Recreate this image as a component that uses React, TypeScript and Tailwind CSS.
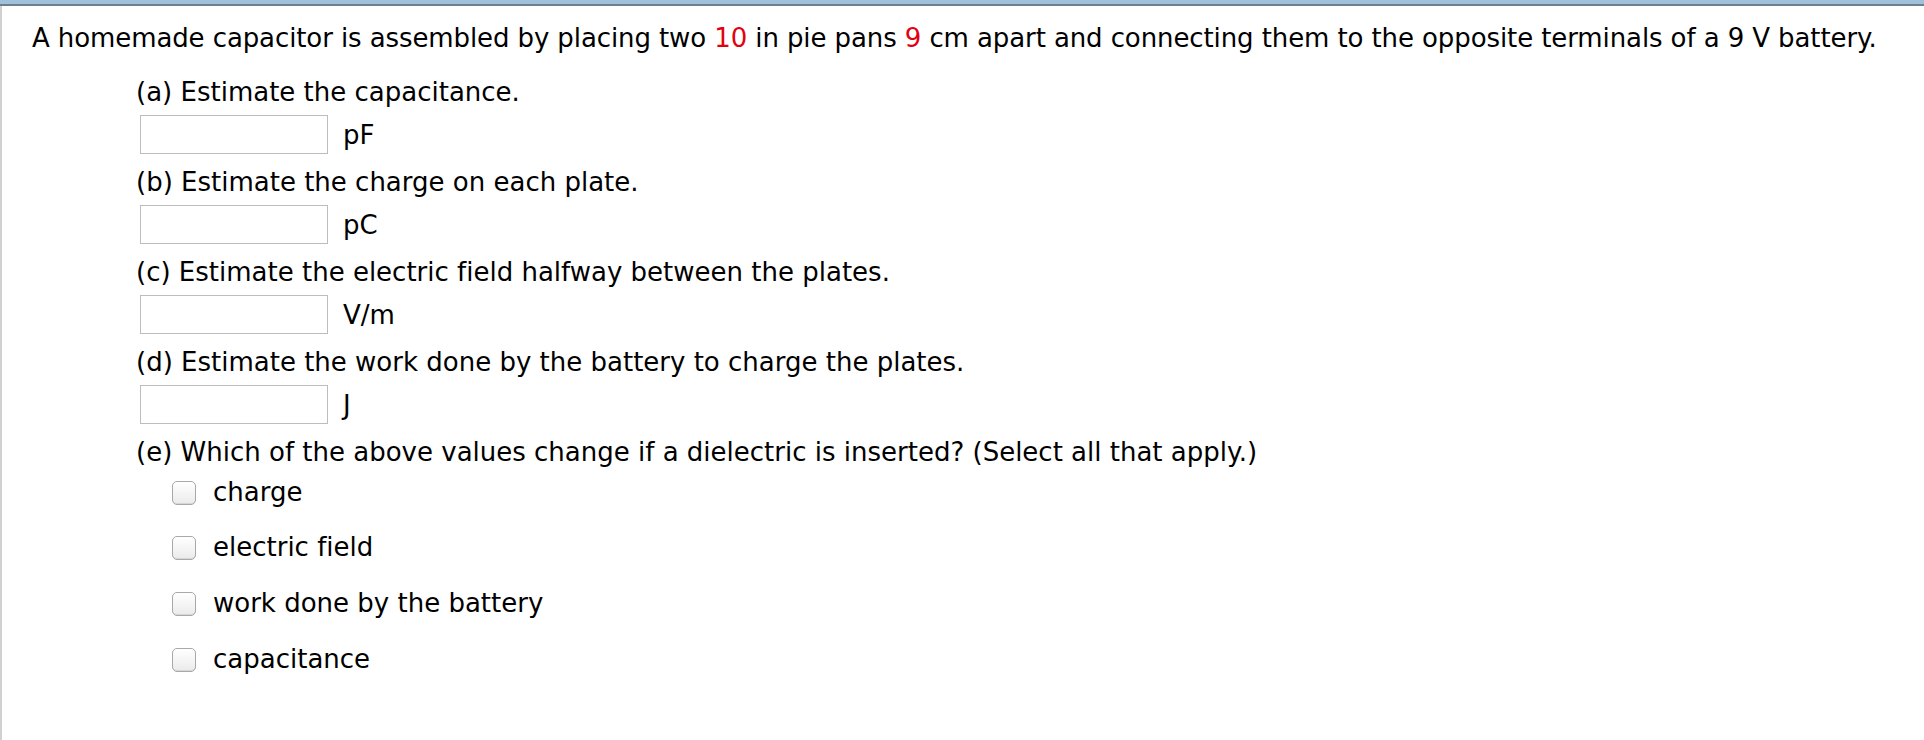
import React from 'react';

const questions = [
  { label: '(a) Estimate the capacitance.', unit: 'pF' },
  { label: '(b) Estimate the charge on each plate.', unit: 'pC' },
  { label: '(c) Estimate the electric field halfway between the plates.', unit: 'V/m' },
  { label: '(d) Estimate the work done by the battery to charge the plates.', unit: 'J' },
];

const options = ['charge', 'electric field', 'work done by the battery', 'capacitance'];

export default function App() {
  return (
    <div className="w-[1924px] h-[740px] bg-white text-black font-['DejaVu_Sans',Verdana,sans-serif] text-[26px] leading-[30px] [font-variant-ligatures:none] overflow-hidden">
      {/* top strip */}
      <div className="h-[4px] bg-[#a0c0dc]" />
      <div className="h-[2px] bg-[#6e808c]" />

      <div className="flex h-[734px]">
        <div className="w-[2px] bg-[#d0d0d0]" />
        <div className="flex-1 pl-[30px] pt-[17px]">
          <p className="tracking-[-0.1px]">
            A homemade capacitor is assembled by placing two{' '}
            <span className="text-[#e3000f]">10</span> in pie pans{' '}
            <span className="text-[#e3000f]">9</span> cm apart and connecting them to the opposite
            terminals of a 9 V battery.
          </p>

          <div className="pl-[104px] pt-[24px]">
            {questions.map((q) => (
              <div key={q.unit} className="mb-[13px]">
                <p>{q.label}</p>
                <div className="flex items-center gap-[15px] pl-[4px] mt-[8px]">
                  <input
                    type="text"
                    className="w-[188px] h-[39px] border border-[#bdbdbd] bg-white outline-none"
                  />
                  <span>{q.unit}</span>
                </div>
              </div>
            ))}

            <p>(e) Which of the above values change if a dielectric is inserted? (Select all that apply.)</p>
            <div className="pl-[36px] -mt-[2px]">
              {options.map((opt) => (
                <label key={opt} className="flex items-center gap-[17px] h-[55.6px]">
                  <span className="w-[24px] h-[24px] rounded-[5px] border border-[#a8a8a8] bg-gradient-to-b from-white to-[#ebebeb] shadow-[inset_0_-1px_0_#d6d6d6]" />
                  <span className="-mt-[2px]">{opt}</span>
                </label>
              ))}
            </div>
          </div>
        </div>
      </div>
    </div>
  );
}
